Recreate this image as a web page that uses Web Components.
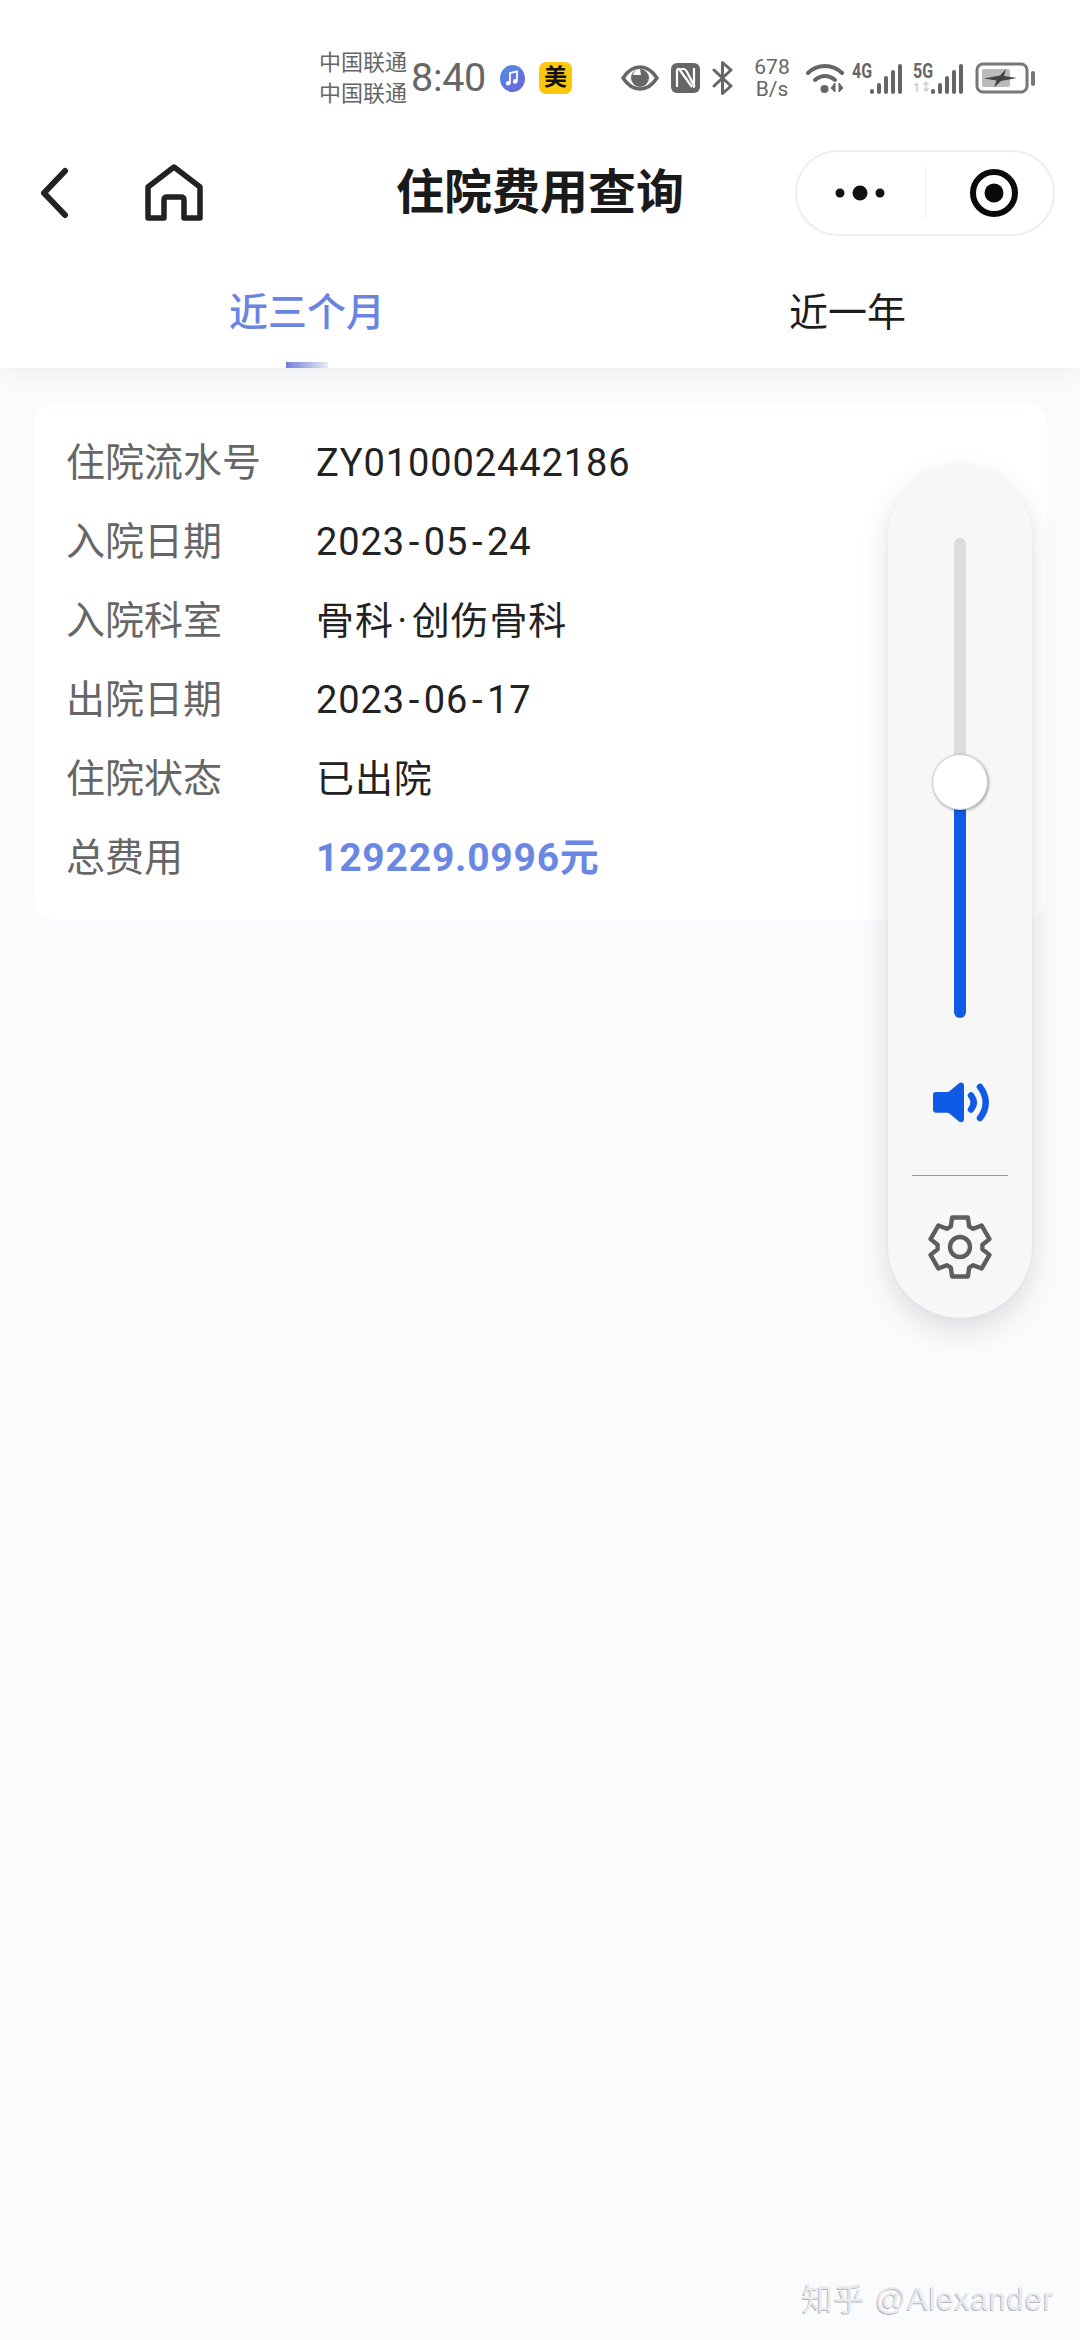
<!DOCTYPE html>
<html lang="zh">
<head>
<meta charset="utf-8">
<title>住院费用查询</title>
<style>
  html, body { margin: 0; padding: 0; }
  body {
    width: 1080px; height: 2340px; overflow: hidden; position: relative;
    background: #fafbfd;
    font-family: Roboto, "Noto Sans CJK SC", sans-serif;
  }
</style>
</head>
<body>
<template id="tpl-status">
  <style>
    :host { display: flex; align-items: center; padding: 26px 0 0 319px; box-sizing: border-box; height: 130px; color: #666; background: #fff; }
    .carrier { width: 87px; font-size: 22px; line-height: 31px; white-space: nowrap; }
    .time { margin-left: 5px; width: 77px; font-size: 39.500px; line-height: 42px; letter-spacing: -.3px; }
    .music { margin-left: 12px; width: 25px; height: 27px; }
    .mei { margin-left: 14px; width: 33px; height: 32px; border-radius: 7px; background: #fdc70c; color: #111; font-size: 23px; font-weight: 700; line-height: 32px; text-align: center; }
    svg { display: block; flex: none; }
    .eye { margin-left: 49px; }
    .nfc { margin-left: 12px; }
    .bt { margin-left: 12px; }
    .speed { margin-left: 19px; width: 40px; text-align: center; font-size: 21px; line-height: 22px; }
    .wifi { margin-left: 14px; width: 40px; }
    .cell { position: relative; width: 52px; height: 32px; margin-left: 4px; }
    .cell + .cell { margin-left: 9px; }
    .cell b { position: absolute; left: 2px; top: -1px; font-size: 20px; line-height: 20px; transform: scaleX(.8); transform-origin: 0 0; }
    .cell i { position: absolute; left: 2px; bottom: 0; font-size: 12px; line-height: 12px; font-style: normal; font-weight: 700; color: #ccc; }
    .battery { margin-left: 12px; }
  </style>
  <div class="carrier">中国联通<br>中国联通</div>
  <div class="time">8:40</div>
  <svg class="music" viewBox="0 0 25 27">
    <defs><linearGradient id="mg" x1="0" y1="0" x2="1" y2="1"><stop offset="0" stop-color="#4f8de6"/><stop offset="1" stop-color="#6f62d8"/></linearGradient></defs>
    <ellipse cx="12.500" cy="13.500" rx="12.500" ry="13.500" fill="url(#mg)"/>
    <path d="M10 18V8l7-1.600V16" fill="none" stroke="#fff" stroke-width="1.800"/>
    <circle cx="8.200" cy="18.200" r="2.300" fill="#fff"/><circle cx="15.200" cy="16.400" r="2.300" fill="#fff"/>
  </svg>
  <div class="mei">美</div>
  <svg class="eye" width="38" height="26" viewBox="0 0 38 26">
    <path d="M2 13C7 5.500 12.500 2 19 2s12 3.500 17 11c-5 7.500-10.500 11-17 11S7 20.500 2 13Z" fill="none" stroke="#666" stroke-width="3.600" stroke-linejoin="round"/>
    <circle cx="19" cy="13" r="9" fill="#666"/><path d="M12 10a8 8 0 0 1 7-6l1 6Z" fill="#fff"/>
  </svg>
  <svg class="nfc" width="29" height="30" viewBox="0 0 29 30">
    <rect width="29" height="30" rx="6" fill="#666"/>
    <path d="M6 24V7.500c0-1.500 1.500-2 2.500-1L21 24M9.500 6h3c1.500 0 2.500 1 3.500 3l7 13.500c.6 1.500 0 1.500-1 1.500M23 22V5" fill="none" stroke="#fff" stroke-width="2.200" stroke-linejoin="round"/>
  </svg>
  <svg class="bt" width="21" height="34" viewBox="0 0 21 34">
    <path d="M2 9l17 16-8.500 7.500V1.500L19 9 2 25" fill="none" stroke="#666" stroke-width="3" stroke-linejoin="round" stroke-linecap="round"/>
  </svg>
  <div class="speed">678<br>B/s</div>
  <svg class="wifi" height="32" viewBox="0 0 40 32">
    <g fill="none" stroke="#666" stroke-width="4" stroke-linecap="round">
      <path d="M2 11C11 1.500 27 1.500 36 11"/><path d="M9 18c6-5.500 14-5.500 20 0"/>
    </g>
    <circle cx="18.500" cy="27" r="4" fill="#666"/>
    <path d="M29 21v9l-4-4ZM33 21v9l4-4Z" fill="#666" stroke="#666" stroke-linejoin="round"/>
  </svg>
  <div class="cell"><b>4G</b><signal-bars></signal-bars></div>
  <div class="cell"><b>5G</b><i>1↕</i><signal-bars></signal-bars></div>
  <svg class="battery" width="60" height="32" viewBox="0 0 60 32">
    <rect x="2" y="2" width="50" height="28" rx="6" fill="none" stroke="#777" stroke-width="3"/>
    <rect x="7" y="7" width="28" height="18" rx="2" fill="#bbb"/>
    <path d="M9 16.500l16-3 6-6.500-2 7 13 2-16 3-7 6.500 2.500-7Z" fill="#444"/>
    <rect x="56" y="9" width="4" height="15" rx="2" fill="#777"/>
  </svg>
</template>

<template id="tpl-signal">
  <style>
    :host { position: absolute; right: 0; bottom: 0; display: flex; align-items: flex-end; gap: 3px; }
    span { width: 4px; background: #666; border-radius: 2px; }
  </style>
  <span style="height:5px"></span><span style="height:11px"></span><span style="height:18px"></span><span style="height:24px"></span><span style="height:30px"></span>
</template>

<template id="tpl-nav">
  <style>
    :host { position: relative; z-index: 1; display: grid; grid-template-columns: 1fr auto 1fr; align-items: center; height: 126px; padding: 0 25px; background: #fff; color: #1a1a1a; }
    .left { display: flex; align-items: center; gap: 76px; padding-left: 15px; }
    svg { display: block; }
    h1 { margin: 0; font-size: 48px; line-height: 60px; font-weight: 700; white-space: nowrap; }
    .capsule { justify-self: end; display: flex; align-items: center; width: 260px; height: 86px; box-sizing: border-box; padding-left: 38px; border: 2px solid #eeeeee; border-radius: 43px; }
    .sep { width: 1px; height: 52px; margin-left: 40px; background: #eee; }
    .target { margin-left: 44px; }
  </style>
  <div class="left">
    <svg width="29" height="52" viewBox="0 0 29 52"><path d="M25 4 4 26l21 22" fill="none" stroke="#222" stroke-width="6" stroke-linecap="round" stroke-linejoin="round"/></svg>
    <svg width="58" height="58" viewBox="0 0 58 58"><path d="M3 54V23L29 3l26 20v31H39V36c0-2-1-3-3-3H22c-2 0-3 1-3 3v18Z" fill="none" stroke="#222" stroke-width="5.500" stroke-linejoin="round"/></svg>
  </div>
  <h1>住院费用查询</h1>
  <div class="capsule">
    <svg width="50" height="16" viewBox="0 0 50 16"><circle cx="5" cy="8" r="4.500" fill="#111"/><circle cx="25" cy="8" r="7.500" fill="#111"/><circle cx="45" cy="8" r="4.500" fill="#111"/></svg>
    <span class="sep"></span>
    <svg class="target" width="48" height="48" viewBox="0 0 48 48"><circle cx="24" cy="24" r="21" fill="none" stroke="#0a0a0a" stroke-width="6"/><circle cx="24" cy="24" r="9.500" fill="#0a0a0a"/></svg>
  </div>
</template>

<template id="tpl-tabs">
  <style>
    :host { display: flex; gap: 404px; height: 112px; padding-left: 229px; background: #fff; box-shadow: 0 6px 24px rgba(0,0,0,.05); }
    ::slotted(tab-item) { flex: none; }
  </style>
  <slot></slot>
</template>

<template id="tpl-tab">
  <style>
    :host { display: flex; flex-direction: column; align-items: center; color: #1c1c1c; font-size: 39px; }
    :host([active]) { color: #6a84e2; font-weight: 500; }
    .label { height: 112px; line-height: 114px; white-space: nowrap; margin-bottom: -6px; }
    .bar { display: none; width: 42px; height: 6px; background: linear-gradient(90deg, #6f80dc, #e9e8f4); }
    :host([active]) .bar { display: block; }
  </style>
  <div class="label"><slot></slot></div>
  <div class="bar"></div>
</template>

<template id="tpl-card">
  <style>
    :host { display: block; margin: 35px 33px 0 34px; padding: 21px 0 22px 32px; background: #fff; border-radius: 22px; }
  </style>
  <slot></slot>
</template>

<template id="tpl-row">
  <style>
    :host { display: grid; grid-template-columns: 250px 1fr; height: 79px; line-height: 79px; font-size: 38px; white-space: nowrap; letter-spacing: .9px; }
    .k { color: #666; letter-spacing: 0; font-size: 39px; }
    .v { color: #222; }
    :host([accent]) .v { color: #6a87e4; font-weight: 700; font-size: 39px; letter-spacing: .8px; }
  </style>
  <div class="k"></div>
  <div class="v"><slot></slot></div>
</template>

<template id="tpl-volume">
  <style>
    :host {
      position: absolute; left: 888px; top: 465px; width: 144px; height: 853px;
      display: flex; flex-direction: column; align-items: center; box-sizing: border-box; padding-top: 73px;
      background: #f7f7f8; border-radius: 72px;
      box-shadow: 0 12px 30px rgba(0,0,0,.12), 0 0 5px rgba(0,0,0,.04);
    }
    .track { position: relative; flex: none; width: 12px; height: 480px; border-radius: 6px; background: linear-gradient(#dcdcdc 0 50%, #0f5be6 50% 100%); }
    .thumb { position: absolute; left: 50%; top: 244px; width: 56px; height: 56px; margin: -28px 0 0 -28px; box-sizing: border-box; border-radius: 50%; background: #fff; border: 1px solid #ccc; box-shadow: 1px 1px 3px rgba(0,0,0,.35); }
    .speaker { margin: 64px 0 0 3px; display: block; }
    hr { width: 96px; height: 1px; margin: 51px 0 0; border: 0; background: #999; }
    .gear { display: block; margin-top: 38px; }
  </style>
  <div class="track"><div class="thumb"></div></div>
  <svg class="speaker" width="58" height="42" viewBox="0 0 58 42">
    <path d="M3 10h11c1 0 2-.5 3-1.300l9-7.500c2-1.500 5-.5 5 2.500V37c0 3-3 4.200-5 2.500l-9-7.500c-1-.8-2-1.300-3-1.300H3c-2 0-3-1-3-3V13c0-2 1-3 3-3Z" fill="#0f5be6"/>
    <path d="M38 13.500c3.600 4.500 3.600 9.500 0 14M47 5c7.600 9.500 7.600 21.500 0 31" fill="none" stroke="#0f5be6" stroke-width="6.500" stroke-linecap="round"/>
  </svg>
  <hr>
  <svg class="gear" width="66" height="66" viewBox="-33 -33 66 66">
    <path fill="none" stroke="#5e5e5e" stroke-width="4.400" stroke-linejoin="round"/>
    <circle r="10" fill="none" stroke="#5e5e5e" stroke-width="4.400"/>
  </svg>
</template>

<template id="tpl-mark">
  <style>
    :host { position: absolute; left: 802px; top: 2282px; font-size: 31px; line-height: 36px; white-space: nowrap; color: #e8eaee; text-shadow: -1px 1px 0 #b4b6ba; letter-spacing: .8px; font-family: "Liberation Sans", "Noto Sans CJK SC", sans-serif; }
  </style>
  <slot></slot>
</template>

<status-bar></status-bar>
<nav-bar></nav-bar>
<tab-bar>
  <tab-item active>近三个月</tab-item>
  <tab-item>近一年</tab-item>
</tab-bar>
<info-card>
  <info-row label="住院流水号">ZY010002442186</info-row>
  <info-row label="入院日期">2023<span style="margin:0 3.700px">-</span>05<span style="margin:0 3.700px">-</span>24</info-row>
  <info-row label="入院科室">骨科<span style="margin:0 3.500px">·</span>创伤骨科</info-row>
  <info-row label="出院日期">2023<span style="margin:0 3.700px">-</span>06<span style="margin:0 3.700px">-</span>17</info-row>
  <info-row label="住院状态">已出院</info-row>
  <info-row label="总费用" accent>129229.0996元</info-row>
</info-card>
<volume-panel></volume-panel>
<water-mark>知乎 @Alexander</water-mark>

<script>
'use strict';

// plain elements: just stamp the template into an open shadow root
function simple(tag, tplId) {
  customElements.define(tag, class extends HTMLElement {
    constructor() {
      super();
      this.attachShadow({ mode: 'open' }).appendChild(document.getElementById(tplId).content.cloneNode(true));
    }
  });
}

simple('signal-bars', 'tpl-signal');
simple('status-bar', 'tpl-status');
simple('nav-bar', 'tpl-nav');
simple('tab-bar', 'tpl-tabs');
simple('tab-item', 'tpl-tab');
simple('info-card', 'tpl-card');
simple('water-mark', 'tpl-mark');

class InfoRow extends HTMLElement {
  constructor() {
    super();
    this.attachShadow({ mode: 'open' }).appendChild(document.getElementById('tpl-row').content.cloneNode(true));
  }
  connectedCallback() {
    this.shadowRoot.querySelector('.k').textContent = this.getAttribute('label') || '';
  }
}
customElements.define('info-row', InfoRow);

class VolumePanel extends HTMLElement {
  constructor() {
    super();
    this.attachShadow({ mode: 'open' }).appendChild(document.getElementById('tpl-volume').content.cloneNode(true));
    this.shadowRoot.querySelector('.gear path').setAttribute('d', this._gearPath(6, 30.5, 22.5));
  }

  // six flat teeth, one of them pointing straight up
  _gearPath(teeth, outer, inner) {
    const pts = [];
    const at = (r, deg) => {
      const a = (deg - 90) * Math.PI / 180;
      return (r * Math.cos(a)).toFixed(2) + ' ' + (r * Math.sin(a)).toFixed(2);
    };
    for (let i = 0; i < teeth; i++) {
      const c = i * 360 / teeth;
      pts.push(at(inner, c - 24), at(outer, c - 15), at(outer, c + 15), at(inner, c + 24));
    }
    return 'M' + pts.join('L') + 'Z';
  }
}
customElements.define('volume-panel', VolumePanel);
</script>
</body>
</html>
